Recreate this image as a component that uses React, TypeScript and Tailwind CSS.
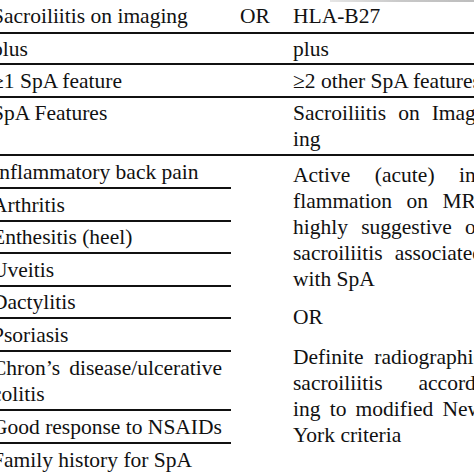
const serif = { fontFamily: '"Liberation Serif", "Times New Roman", serif' };

const leftRows: { lines: string[]; h: string; justify?: boolean }[] = [
  { lines: ["Inflammatory back pain"], h: "h-[33px]" },
  { lines: ["Arthritis"], h: "h-[33px]" },
  { lines: ["Enthesitis (heel)"], h: "h-[32px]" },
  { lines: ["Uveitis"], h: "h-[33px]" },
  { lines: ["Dactylitis"], h: "h-[32px]" },
  { lines: ["Psoriasis"], h: "h-[33px]" },
  { lines: ["Chron\u2019s disease/ulcerative", "colitis"], h: "h-[59px]", justify: true },
  { lines: ["Good response to NSAIDs"], h: "h-[33px]" },
  { lines: ["Family history for SpA"], h: "h-[33px]" }
];

const Justified = ({ text }: { text: string }) => (
  <div className="whitespace-nowrap text-justify [text-align-last:justify]">{text}</div>
);

const TopRow = ({
  left,
  mid,
  right,
  h
}: {
  left: string[];
  mid?: string;
  right: React.ReactNode;
  h: string;
}) => (
  <div className={`grid grid-cols-[239px_62px_198px] ${h} border-b-2 border-[#111] items-center`}>
    <div className="pr-[9px]">
      {left.map((l, i) => (
        <div key={i} className="whitespace-nowrap">
          {l || "\u00a0"}
        </div>
      ))}
    </div>
    <div className="pl-[9px] whitespace-nowrap">{mid}</div>
    <div className="pr-[8px]">{right}</div>
  </div>
);

export default function App() {
  return (
    <div className="w-[474px] h-[474px] overflow-hidden bg-white relative">
      <div className="absolute top-0 left-[330px] right-0 h-[2px] bg-gradient-to-r from-[#e6e6e6] via-[#c8c8c8] to-[#bdbdbd]" />
      <div
        className="ml-[-8px] w-[499px] text-[21.5px] leading-[26px] text-[#111]"
        style={serif}
      >
        <TopRow h="h-[34px]" left={["Sacroiliitis on imaging"]} mid="OR" right={<div>HLA-B27</div>} />
        <TopRow h="h-[31px]" left={["plus"]} right={<div>plus</div>} />
        <TopRow
          h="h-[33px]"
          left={["\u22651 SpA feature"]}
          right={<div className="whitespace-nowrap">{"\u22652 other SpA features"}</div>}
        />
        <TopRow
          h="h-[58px]"
          left={["SpA Features", ""]}
          right={
            <div>
              <Justified text="Sacroiliitis on Imag-" />
              <div>ing</div>
            </div>
          }
        />
        <div className="grid grid-cols-[239px_62px_198px] items-start">
          <div className="flex flex-col">
            {leftRows.map((r, i) => (
              <div
                key={i}
                className={`${r.h} border-b-2 border-[#111] flex flex-col justify-center pr-[9px]`}
              >
                {r.lines.map((l, j) =>
                  r.justify && j === 0 ? (
                    <Justified key={j} text={l} />
                  ) : (
                    <div key={j} className="whitespace-nowrap">
                      {l}
                    </div>
                  )
                )}
              </div>
            ))}
          </div>
          <div />
          <div className="pt-[6px] pr-[8px]">
            <div className="mb-[12px]">
              <Justified text="Active (acute) in-" />
              <Justified text="flammation on MRI" />
              <Justified text="highly suggestive of" />
              <Justified text="sacroiliitis associated" />
              <div>with SpA</div>
            </div>
            <div className="mb-[14px]">OR</div>
            <div>
              <Justified text="Definite radiographic" />
              <Justified text="sacroiliitis accord-" />
              <Justified text="ing to modified New" />
              <div>York criteria</div>
            </div>
          </div>
        </div>
      </div>
    </div>
  );
}
